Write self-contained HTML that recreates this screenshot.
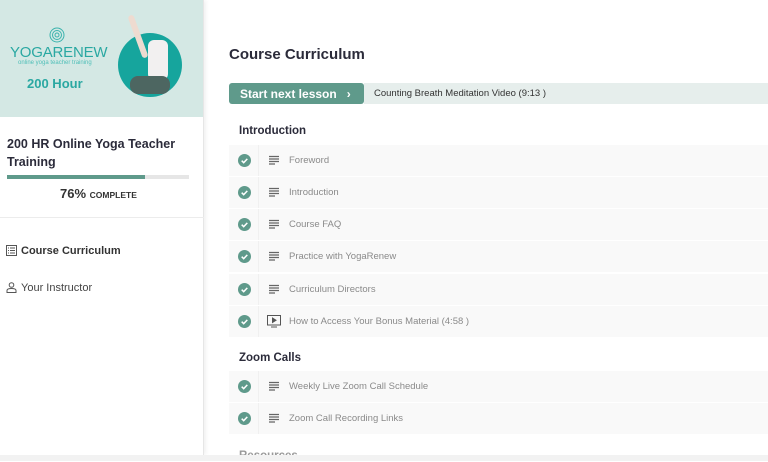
<!DOCTYPE html>
<html><head><meta charset="utf-8"><style>
*{margin:0;padding:0;box-sizing:border-box}
body{width:768px;height:461px;overflow:hidden;background:#fff;font-family:"Liberation Sans",sans-serif;position:relative}
.side{position:absolute;left:0;top:0;width:204px;height:455px;background:#fff;border-right:1px solid #e6e6e6;box-shadow:2px 0 4px rgba(0,0,0,.06)}
.hdr{height:117px;background:#d4e8e4;position:relative}
.row{position:absolute;left:229px;right:0;height:31px;background:#f9f9f9}
.chk{position:absolute;left:9px;top:9px}
.vl{position:absolute;left:29px;top:0;width:1px;height:31px;background:#f0f0f0}
.ic{position:absolute;left:40px;top:10px}
.rt{position:absolute;left:60px;top:10px;font-size:9.5px;color:#8a8a8a}
.sec{position:absolute;left:239px;font-size:11.5px;font-weight:bold;color:#2b2b3a}
</style></head><body>
<div class="side">
<div class="hdr">
<svg style="position:absolute;left:49px;top:27px" width="16" height="16" viewBox="0 0 16 16" fill="none" stroke="#3bb3ad" stroke-width="1"><circle cx="8" cy="8" r="7"/><circle cx="8" cy="8" r="4.5"/><circle cx="8" cy="8" r="2"/></svg>
<div style="position:absolute;left:10px;top:44px;font-size:15px;color:#2aa8a2;letter-spacing:-.2px">YOGARENEW</div>
<div style="position:absolute;left:18px;top:60px;font-size:6px;color:#4fbfb8">online yoga teacher training</div>
<div style="position:absolute;left:27px;top:76px;font-size:13px;color:#2aa8a2;font-weight:bold">200 Hour</div>
<div style="position:absolute;left:118px;top:33px;width:64px;height:64px;border-radius:50%;background:#16a59d"></div>
<div style="position:absolute;left:135px;top:14px;width:6px;height:45px;background:#eedbd0;transform:rotate(-20deg);border-radius:3px"></div>
<div style="position:absolute;left:148px;top:40px;width:20px;height:40px;background:#f2f0f0;border-radius:6px"></div>
<div style="position:absolute;left:130px;top:76px;width:40px;height:18px;background:#4d6661;border-radius:8px"></div>
</div>
<div style="position:absolute;left:7px;top:135px;font-size:12.5px;font-weight:bold;color:#2b2b3a;line-height:18px">200 HR Online Yoga Teacher<br>Training</div>
<div style="position:absolute;left:7px;top:175px;width:182px;height:4px;background:#e6e6e6"><div style="width:138px;height:4px;background:#5f9a8b"></div></div>
<div style="position:absolute;left:60px;top:186px;font-size:13px;font-weight:bold;color:#333">76% <span style="font-size:8.5px">COMPLETE</span></div>
<div style="position:absolute;left:0;top:217px;width:204px;height:1px;background:#ececec"></div>
<svg style="position:absolute;left:6px;top:245px" width="11" height="11" viewBox="0 0 11 11" fill="none" stroke="#555"><rect x=".5" y=".5" width="10" height="10"/><path d="M2 3h1M4 3h5M2 5.5h1M4 5.5h5M2 8h1M4 8h5"/></svg>
<div style="position:absolute;left:21px;top:245px;font-size:11px;font-weight:bold;color:#333">Course Curriculum</div>
<svg style="position:absolute;left:6px;top:282px" width="11" height="11" viewBox="0 0 11 11" fill="none" stroke="#555"><circle cx="5.5" cy="3" r="2.3"/><path d="M1 10.5V8.5Q1 6.5 5.5 6.5T10 8.5v2z"/></svg>
<div style="position:absolute;left:21px;top:282px;font-size:11px;color:#444">Your Instructor</div>
</div>
<div style="position:absolute;left:229px;top:46px;font-size:15px;font-weight:bold;color:#2b2b3a">Course Curriculum</div>
<div style="position:absolute;left:364px;top:83px;right:0;height:21px;background:#e6eeec"></div>
<div style="position:absolute;left:374px;top:88px;font-size:9.5px;color:#333">Counting Breath Meditation Video (9:13 )</div>
<div style="position:absolute;left:229px;top:83px;width:135px;height:21px;background:#5f9a8b;border-radius:3px;color:#fff;font-weight:bold;font-size:12px;padding:4px 0 0 11px">Start next lesson &nbsp;&nbsp;›</div>
<div class="sec" style="top:125px">Introduction</div>
<div class="sec" style="top:352px">Zoom Calls</div>
<div class="sec" style="top:450px;color:#999">Resources</div>

<svg width="0" height="0" style="position:absolute"><defs><symbol id="c" viewBox="0 0 13 13"><circle cx="6.5" cy="6.5" r="6.5" fill="#5f9a8b"/><path d="M3.7 6.7l2 2 3.6-3.8" fill="none" stroke="#fff" stroke-width="1.5"/></symbol><symbol id="t" viewBox="0 0 10 10"><path d="M0 1.5h10M0 4h10M0 6.5h10M0 9h6" stroke="#666" stroke-width="1.2"/></symbol></defs></svg>

<div class="row" style="top:145px"><svg class="chk" width="13" height="13"><use href="#c"/></svg><div class="vl"></div><svg class="ic" width="10" height="10"><use href="#t"/></svg><div class="rt">Foreword</div></div>
<div class="row" style="top:177px"><svg class="chk" width="13" height="13"><use href="#c"/></svg><div class="vl"></div><svg class="ic" width="10" height="10"><use href="#t"/></svg><div class="rt">Introduction</div></div>
<div class="row" style="top:209px"><svg class="chk" width="13" height="13"><use href="#c"/></svg><div class="vl"></div><svg class="ic" width="10" height="10"><use href="#t"/></svg><div class="rt">Course FAQ</div></div>
<div class="row" style="top:241px"><svg class="chk" width="13" height="13"><use href="#c"/></svg><div class="vl"></div><svg class="ic" width="10" height="10"><use href="#t"/></svg><div class="rt">Practice with YogaRenew</div></div>
<div class="row" style="top:274px"><svg class="chk" width="13" height="13"><use href="#c"/></svg><div class="vl"></div><svg class="ic" width="10" height="10"><use href="#t"/></svg><div class="rt">Curriculum Directors</div></div>
<div class="row" style="top:306px"><svg class="chk" width="13" height="13"><use href="#c"/></svg><div class="vl"></div><svg class="ic" style="left:38px;top:9px" width="14" height="13" fill="none" stroke="#555"><rect x=".5" y=".5" width="13" height="9.5"/><path d="M5.5 3v4.5l3.5-2.2z" fill="#555"/><path d="M4 12h6"/></svg><div class="rt">How to Access Your Bonus Material (4:58 )</div></div>
<div class="row" style="top:371px"><svg class="chk" width="13" height="13"><use href="#c"/></svg><div class="vl"></div><svg class="ic" width="10" height="10"><use href="#t"/></svg><div class="rt">Weekly Live Zoom Call Schedule</div></div>
<div class="row" style="top:403px"><svg class="chk" width="13" height="13"><use href="#c"/></svg><div class="vl"></div><svg class="ic" width="10" height="10"><use href="#t"/></svg><div class="rt">Zoom Call Recording Links</div></div>
<div style="position:absolute;left:0;top:455px;width:768px;height:6px;background:#f2f2f2"></div>
</body></html>
